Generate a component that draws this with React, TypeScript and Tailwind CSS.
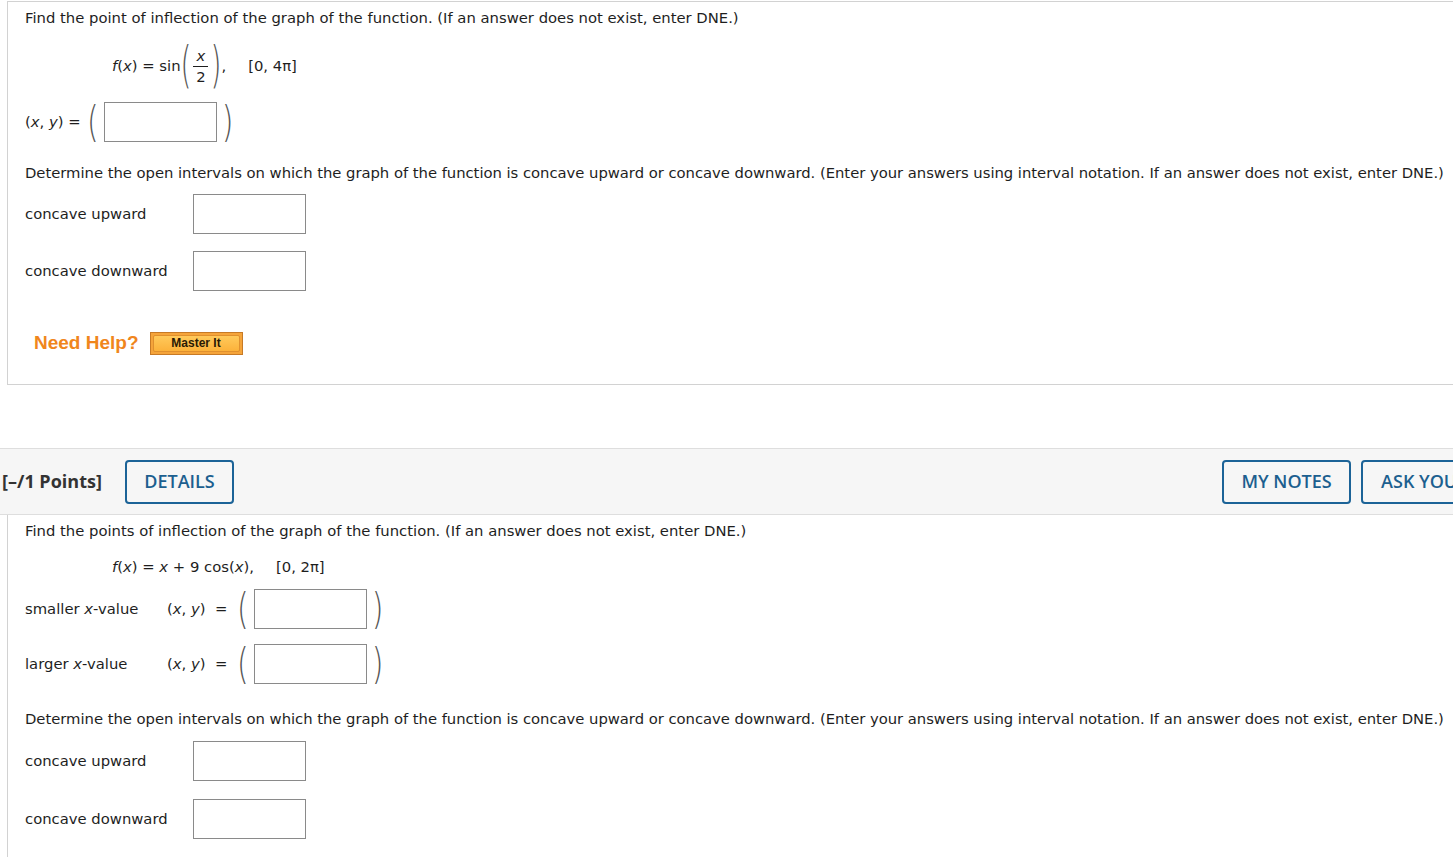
import type { ReactNode } from 'react'

const ANSWER_BOX = 'h-[40px] w-[113px] shrink-0 border border-[#8a8a8a] bg-white'

function BigParen({ side }: { side: 'l' | 'r' }) {
  return (
    <span className="inline-block origin-center scale-y-[1.45] font-['DejaVu_Sans',sans-serif] text-[30px] font-extralight leading-[40px] text-[#555]">
      {side === 'l' ? '(' : ')'}
    </span>
  )
}

function PointInput() {
  return (
    <div className="flex items-center">
      <BigParen side="l" />
      <div className={`${ANSWER_BOX} mx-[5px] w-[112px]`} />
      <BigParen side="r" />
    </div>
  )
}

function IntervalRow({ label, className }: { label: string; className?: string }) {
  return (
    <div className={`flex items-center ${className ?? ''}`}>
      <span className="w-[168px] shrink-0 leading-[20px]">{label}</span>
      <div className={ANSWER_BOX} />
    </div>
  )
}

function I({ children }: { children: ReactNode }) {
  return <i className="italic">{children}</i>
}

function OutlineButton({ children, className }: { children: ReactNode; className?: string }) {
  return (
    <button
      className={`flex h-[44px] shrink-0 items-center justify-center whitespace-nowrap rounded-[4px] border-2 border-[#1c6397] bg-transparent font-['Open_Sans','Noto_Sans',sans-serif] text-[18px] font-semibold text-[#1c5f8f] ${className ?? ''}`}
    >
      {children}
    </button>
  )
}

export default function App() {
  return (
    <div className="min-h-screen overflow-hidden whitespace-nowrap bg-white pt-[1px] font-['Verdana','DejaVu_Sans',sans-serif] text-[14.8px] text-[#1e1e1e]">
      {/* question 1 */}
      <section className="ml-[7px] border-b border-l border-t border-[#d2d2d2] pb-[29px] pl-[17px] pt-[6px]">
        <p className="leading-[20px]">
          Find the point of inflection of the graph of the function. (If an answer does not exist, enter DNE.)
        </p>

        <div className="ml-[87px] mt-[12px] flex h-[52px] items-center">
          <span>
            <I>f</I>(<I>x</I>) = sin
          </span>
          <span className="inline-block scale-y-[1.8] font-['DejaVu_Sans',sans-serif] text-[28px] font-extralight leading-none text-[#555]">
            (
          </span>
          <span className="mx-[2px] inline-flex flex-col items-center leading-[20px]">
            <I>x</I>
            <span className="h-px w-[15px] bg-[#1e1e1e]" />
            <span>2</span>
          </span>
          <span className="inline-block scale-y-[1.8] font-['DejaVu_Sans',sans-serif] text-[28px] font-extralight leading-none text-[#555]">
            )
          </span>
          <span>,</span>
          <span className="ml-[22px]">[0, 4π]</span>
        </div>

        <div className="mt-[10px] flex items-center">
          <span className="w-[62px] shrink-0">
            (<I>x</I>, <I>y</I>) =
          </span>
          <PointInput />
        </div>

        <p className="mt-[21px] leading-[20px] tracking-[-0.03px]">
          Determine the open intervals on which the graph of the function is concave upward or concave downward. (Enter your answers using interval notation. If an answer does not exist, enter DNE.)
        </p>

        <IntervalRow label="concave upward" className="mt-[11px]" />
        <IntervalRow label="concave downward" className="mt-[17px]" />

        <div className="ml-[9px] mt-[40px] flex h-[24px] items-center gap-[11px]">
          <span className="font-['Liberation_Sans',Arial,sans-serif] text-[19px] font-bold text-[#f0861c]">Need Help?</span>
          <button className="flex h-[23px] w-[93px] items-center justify-center border border-[#c77a26] bg-[#f5a43a] p-[2px]">
            <span className="flex h-full w-full items-center justify-center rounded-[2px] border border-[#e0902e] bg-gradient-to-b from-[#ffc95a] to-[#fcb23a] font-['Liberation_Sans',Arial,sans-serif] text-[12px] font-bold text-[#2a1a05]">
              Master It
            </span>
          </button>
        </div>
      </section>

      <div className="h-[63px]" />

      {/* question 2 header */}
      <header className="flex h-[67px] items-center border-y border-[#dedede] bg-[#f6f6f6]">
        <span className="ml-[2px] w-[123px] shrink-0 font-['Open_Sans','Noto_Sans',sans-serif] text-[18px] font-bold text-[#333]">
          [–/1 Points]
        </span>
        <OutlineButton className="w-[109px]">DETAILS</OutlineButton>
        <div className="ml-auto mr-[-119px] flex shrink-0 gap-[10px]">
          <OutlineButton className="w-[129px]">MY NOTES</OutlineButton>
          <OutlineButton className="px-[18px]">ASK YOUR TEACHER</OutlineButton>
        </div>
      </header>

      {/* question 2 */}
      <section className="ml-[7px] border-l border-[#d2d2d2] pb-[30px] pl-[17px] pt-[6px]">
        <p className="leading-[20px]">
          Find the points of inflection of the graph of the function. (If an answer does not exist, enter DNE.)
        </p>

        <p className="ml-[87px] mt-[16px] leading-[20px]">
          <I>f</I>(<I>x</I>) = <I>x</I> + 9 cos(<I>x</I>),
          <span className="ml-[22px]">[0, 2π]</span>
        </p>

        <div className="mt-[12px] flex items-center">
          <span className="w-[142px] shrink-0">
            smaller <I>x</I>-value
          </span>
          <span className="w-[70px] shrink-0">
            (<I>x</I>, <I>y</I>) &nbsp;=
          </span>
          <PointInput />
        </div>

        <div className="mt-[15px] flex items-center">
          <span className="w-[142px] shrink-0">
            larger <I>x</I>-value
          </span>
          <span className="w-[70px] shrink-0">
            (<I>x</I>, <I>y</I>) &nbsp;=
          </span>
          <PointInput />
        </div>

        <p className="mt-[25px] leading-[20px] tracking-[-0.03px]">
          Determine the open intervals on which the graph of the function is concave upward or concave downward. (Enter your answers using interval notation. If an answer does not exist, enter DNE.)
        </p>

        <IntervalRow label="concave upward" className="mt-[12px]" />
        <IntervalRow label="concave downward" className="mt-[18px]" />
      </section>
    </div>
  )
}
